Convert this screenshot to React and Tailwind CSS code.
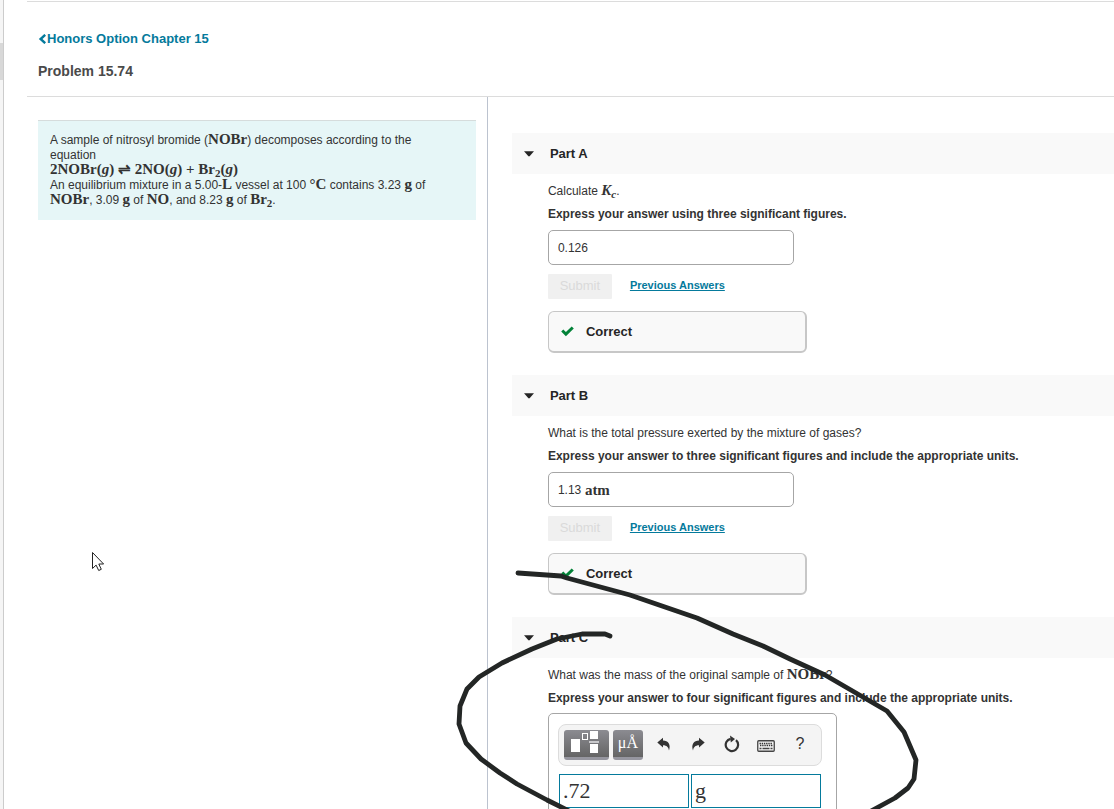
import React, { useState } from 'react';

// Inline chemistry / math text
function Chem({ children, italic }) {
  return (
    <span
      className={`font-['Liberation_Serif',serif] text-[15px] font-bold leading-[10px] ${
        italic ? 'italic' : ''
      }`}
    >
      {children}
    </span>
  );
}

function Sub({ children }) {
  return <sub className="text-[11px] leading-none">{children}</sub>;
}

function PartSection({ title, question, instruction, children }) {
  const [open, setOpen] = useState(true);

  return (
    <section>
      <h2>
        <button
          type="button"
          aria-expanded={open}
          onClick={() => setOpen(!open)}
          className="flex h-[41px] w-full items-center bg-[#f9f9f9] pl-3 text-left text-[13px] font-bold text-[#252525]"
        >
          <svg width="10" height="6" viewBox="0 0 10 6" className="mr-4">
            <path d="M0 0.3h10L5.8 5a1.1 1.1 0 0 1-1.6 0z" fill="#252525" />
          </svg>
          {title}
        </button>
      </h2>
      {open && (
        <div className="pt-[5px] pl-9">
          <p className="leading-6">{question}</p>
          <p className="leading-[23px] font-bold">{instruction}</p>
          {children}
        </div>
      )}
    </section>
  );
}

function GradedAnswer({ label, value, unit }) {
  return (
    <div className="pt-1 pb-[22px]">
      <div className="flex h-[35px] w-[246px] items-center rounded-[5px] border border-[#a6a6a6] bg-white px-[9px]">
        <input
          aria-label={label}
          readOnly
          defaultValue={value}
          className={`bg-transparent outline-none ${unit ? 'w-[27px]' : 'w-full'}`}
        />
        {unit && <Chem>{unit}</Chem>}
      </div>
      <div className="mt-[9px] flex items-center gap-[18px]">
        <button
          type="button"
          disabled
          className="h-[25px] w-16 rounded-[1px] bg-[#f0f0f0] pb-0.5 text-[13px] text-[#dadada]"
        >
          Submit
        </button>
        <a href="#previous" className="pb-0.5 text-[11px] font-bold text-[#047a9c] underline">
          Previous Answers
        </a>
      </div>
      <div className="mt-3 flex h-[42px] w-[259px] items-center gap-3 rounded-md border border-r-2 border-b-2 border-[#c7c7c7] bg-[#f9f9f9] pl-3 text-[13px] font-bold text-[#252525]">
        <svg width="13" height="11" viewBox="0 0 13 11" aria-hidden="true">
          <path d="M0.2 5.6 2.3 3.5 4.9 6 10.7 0.5 12.8 2.6 4.9 10.2z" fill="#038238" />
        </svg>
        Correct
      </div>
    </div>
  );
}

function ToolButton({ label, children }) {
  return (
    <button
      type="button"
      aria-label={label}
      className="flex h-[30px] w-[34px] items-center justify-center text-[#333]"
    >
      {children}
    </button>
  );
}

function AnswerEditor() {
  return (
    <div className="mt-[3px] w-[289px] rounded-t-[5px] border border-[#a6a6a6] px-[9px] pt-[10px] pb-6">
      <div className="flex h-[42px] w-[264px] items-center rounded-lg border border-[#dcdcdc] bg-[#f4f4f4] pl-[5px]">
        <button
          type="button"
          aria-label="Templates"
          className="h-[30px] w-[45px] rounded-[3px] border-b-[3px] border-[#96969f] bg-linear-to-b from-[#8b8b91] to-[#656565]"
        >
          <svg width="45" height="27" viewBox="0 0 45 27" fill="#fff">
            <rect x="7" y="9" width="9" height="13" />
            <rect x="18.5" y="3.5" width="5" height="6" fill="none" stroke="#fff" />
            <rect x="26" y="1" width="8" height="8" />
            <rect x="25" y="11" width="10" height="2" fill="#c9c9cc" />
            <rect x="26" y="14" width="8" height="9" />
          </svg>
        </button>
        <button
          type="button"
          aria-label="Units and symbols"
          className="ml-1 h-[30px] w-[30px] rounded-[3px] border-b-[3px] border-[#96969f] bg-linear-to-b from-[#8b8b91] to-[#656565] pb-0.5 font-['Liberation_Serif',serif] text-[16px] leading-none text-white"
        >
          μÅ
        </button>
        <div className="ml-1 flex pb-0.5">
          <ToolButton label="Undo">
            <svg width="14" height="14" viewBox="0 0 14 14" fill="#333">
              <path d="M0.3 5.6 6 0.8V3.4C11.2 3.6 14 7 12 13.6 11.6 10 9.8 8.3 6 8.2V10.6z" />
            </svg>
          </ToolButton>
          <ToolButton label="Redo">
            <svg width="14" height="14" viewBox="0 0 14 14" fill="#333">
              <path d="M13.7 5.6 8 0.8V3.4C2.8 3.6 0 7 2 13.6 2.4 10 4.2 8.3 8 8.2V10.6z" />
            </svg>
          </ToolButton>
          <ToolButton label="Reset">
            <svg width="16" height="18" viewBox="0 0 16 18" fill="none">
              <path
                d="M12 5.2A6.2 6.2 0 1 1 6.6 3.8"
                stroke="#333"
                strokeWidth="2.2"
              />
              <path d="M6 0.4 11 4 6.8 7.4z" fill="#333" />
            </svg>
          </ToolButton>
          <ToolButton label="Keyboard">
            <svg width="18" height="12" viewBox="0 0 18 12" fill="none" className="mt-1">
              <rect x="0.75" y="0.75" width="16.5" height="10.5" rx="1" stroke="#444" strokeWidth="1.3" />
              <path d="M2.5 3.5h13M3 5.5h12.5" stroke="#333" strokeWidth="1.3" strokeDasharray="1.4 0.8" />
              <path d="M2.5 8.5h2M13.5 8.5h2" stroke="#444" strokeWidth="1.5" />
              <path d="M5.5 8.5h7" stroke="#444" strokeWidth="1.5" />
            </svg>
          </ToolButton>
          <ToolButton label="Help">
            <span className="text-[16px]">?</span>
          </ToolButton>
        </div>
      </div>
      <div className="mt-2 ml-px flex gap-[2px] font-['Liberation_Serif',serif] text-[22px]">
        <input
          aria-label="Value"
          defaultValue=".72"
          className="h-[34px] w-[130px] border border-[#047a9c] bg-white px-[3px] outline-none"
        />
        <input
          aria-label="Units"
          defaultValue="g"
          className="h-[34px] w-[130px] border border-[#047a9c] bg-white px-[3px] outline-none"
        />
      </div>
    </div>
  );
}

// Freehand marks drawn over the page
function PenMarks() {
  return (
    <svg
      width="1114"
      height="809"
      viewBox="0 0 1114 809"
      fill="none"
      aria-hidden="true"
      className="pointer-events-none absolute top-0 left-0"
    >
      <g stroke="#232625" strokeWidth="4.8" strokeLinecap="round" strokeLinejoin="round">
        <path d="M518 573 561 576 567 578 630 595 697 618 733 634 763 646 790 659 825 675 887 711 904 732 916 760 914 779 908 788 895 798 871 811" />
        <path d="M610 636 605 634 582 634 557 639 532 649 502 663 479 677 467 689 460 706 459 724 466 743 481 759 500 773 517 784 547 800 571 812" />
      </g>
      <path
        d="M92.5 552.5v16l3.6-3.4 2.6 5.4 2.6-1.2-2.5-5.3h4.8z"
        fill="#fff"
        stroke="#222"
      />
    </svg>
  );
}

export default function App() {
  return (
    <div className="relative flex h-screen overflow-hidden bg-white font-['Liberation_Sans',Arial,sans-serif] text-[12px] text-[#333]">
      {/* Collapsed side rail */}
      <div className="w-1 shrink-0 border-r border-[#cccccc] bg-[#f5f5f5] pt-[43px]">
        <div className="h-[37px] bg-[#d8d8d8]" />
      </div>

      <main className="mt-px ml-[23px] flex grow flex-col border-t border-[#dcdcdc]">
        <header className="h-[95px] shrink-0 border-b border-[#dcdcdc] pt-7 pl-[11px]">
          <a href="#assignment" className="flex items-center text-[13px] leading-[18px] font-bold text-[#047a9c]">
            <svg width="9" height="10" viewBox="0 0 9 10" aria-hidden="true">
              <path d="M7.2 0.8 2.6 5l4.6 4.2" fill="none" stroke="#047a9c" strokeWidth="2.4" />
            </svg>
            Honors Option Chapter 15
          </a>
          <h1 className="mt-[14px] text-[14px] leading-[18px] font-bold text-[#4a4a4a]">Problem 15.74</h1>
        </header>

        <div className="flex grow">
          <div className="w-[42.4%] shrink-0 border-r border-[#bcc3cf] pt-[23px] pr-[11px] pl-[11px]">
            <div className="border-t border-[#d6dcdc] bg-[#e6f6f7] px-3 py-3 leading-[15px]">
              <p className="pr-9">
                A sample of nitrosyl bromide (<Chem>NOBr</Chem>) decomposes according to the{' '}
                <span>equation</span>
              </p>
              <p>
                <Chem>
                  2NOBr(<i>g</i>) ⇌ 2NO(<i>g</i>) + Br<Sub>2</Sub>(<i>g</i>)
                </Chem>
              </p>
              <p className="pr-8">
                An equilibrium mixture in a 5.00-<Chem>L</Chem> vessel at 100 <Chem>°C</Chem> contains 3.23{' '}
                <Chem>g</Chem> of <Chem>NOBr</Chem>, 3.09 <Chem>g</Chem> of <Chem>NO</Chem>, and 8.23{' '}
                <Chem>g</Chem> of{' '}
                <Chem>
                  Br<Sub>2</Sub>
                </Chem>
                .
              </p>
            </div>
          </div>

          <div className="grow pt-9 pl-6">
            <PartSection
              title="Part A"
              question={
                <>
                  Calculate{' '}
                  <Chem italic>
                    K<Sub>c</Sub>
                  </Chem>
                  .
                </>
              }
              instruction="Express your answer using three significant figures."
            >
              <GradedAnswer label="Part A answer" value="0.126" />
            </PartSection>
            <PartSection
              title="Part B"
              question="What is the total pressure exerted by the mixture of gases?"
              instruction="Express your answer to three significant figures and include the appropriate units."
            >
              <GradedAnswer label="Part B answer" value="1.13" unit="atm" />
            </PartSection>
            <PartSection
              title="Part C"
              question={
                <>
                  What was the mass of the original sample of <Chem>NOBr</Chem>?
                </>
              }
              instruction="Express your answer to four significant figures and include the appropriate units."
            >
              <AnswerEditor />
            </PartSection>
          </div>
        </div>
      </main>

      <PenMarks />
    </div>
  );
}
